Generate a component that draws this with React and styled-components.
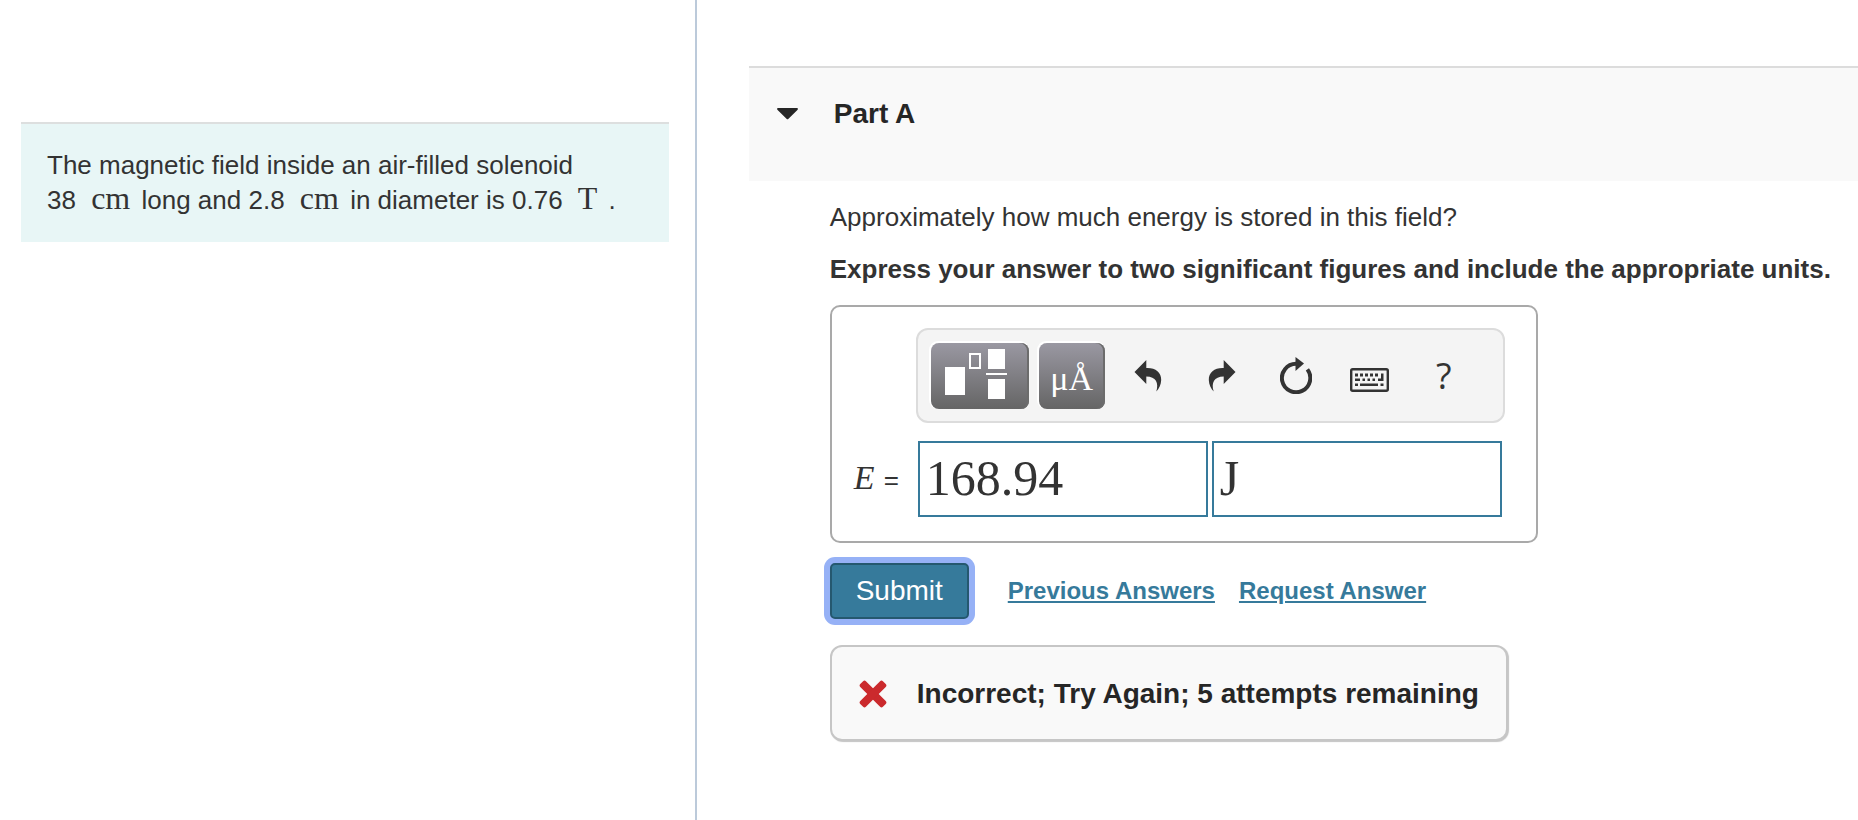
import React, { useState } from 'react';
import styled, { createGlobalStyle } from 'styled-components';

const GlobalStyle = createGlobalStyle`
  * {
    box-sizing: border-box;
  }

  body {
    margin: 0;
    background: #fff;
    color: #333;
    font-family: 'Liberation Sans', Arial, sans-serif;
    font-size: 26px;
    line-height: 34px;
  }

  p {
    margin: 0;
  }
`;

const Page = styled.div`
  display: grid;
  grid-template-columns: 3fr 5fr;
  min-height: 100vh;
`;

const ProblemPane = styled.aside`
  padding: 122px 26px 24px 21px;
  border-right: 2px solid #bccada;
`;

const ProblemCard = styled.p`
  padding: 24px 26px;
  border-top: 2px solid #dddfdf;
  background: #e8f6f6;
  min-height: 120px;
`;

const Unit = styled.span`
  margin: 0 4px 0 8px;
  font-family: 'Liberation Serif', serif;
  font-size: 32px;
  line-height: 1;
`;

const WorkPane = styled.main`
  min-width: 0;
  padding: 66px 0 24px 52px;
`;

const PartHeader = styled.header`
  height: 115px;
  padding: 29px 28px;
  border-top: 2px solid #dcdcdc;
  background: #f9f9f9;
`;

const PartToggle = styled.button`
  display: flex;
  align-items: center;
  gap: 36px;
  padding: 0;
  border: 0;
  background: none;
  color: #262626;
  font: bold 28px/34px 'Liberation Sans', Arial, sans-serif;
`;

const PartBody = styled.section`
  display: flex;
  flex-direction: column;
  align-items: flex-start;
  padding: 19px 0 0 81px;
`;

const Question = styled.p`
  margin-bottom: 18px;
`;

const Instructions = styled.p`
  font-weight: bold;
  white-space: nowrap;
`;

const AnswerBox = styled.form`
  width: 708px;
  max-width: 100%;
  margin-top: 19px;
  padding: 21px 31px 24px 20px;
  border: 2px solid #a9a9a9;
  border-radius: 10px;
`;

const Toolbar = styled.div`
  display: flex;
  align-items: center;
  height: 95px;
  margin-left: 64px;
  padding: 0 13px;
  border: 2px solid #dcdcdc;
  border-radius: 12px;
  background: #f4f4f4;
`;

const Palettes = styled.div`
  display: flex;
  gap: 10px;
  margin-right: 6px;
`;

const PaletteButton = styled.button`
  display: flex;
  align-items: center;
  justify-content: center;
  width: ${props => props.$width}px;
  height: 66px;
  padding: ${props => props.$padTop || 0}px 0 0;
  border: 0;
  border-radius: 8px;
  background: linear-gradient(#9a98a2, #656565);
  box-shadow: -1px -1px 0 1px #fff, inset -2px 0 0 #6c6c6c;
  color: #fff;
  font: 34px/40px 'Liberation Serif', serif;
`;

const ToolButton = styled.button`
  display: flex;
  align-items: center;
  justify-content: center;
  width: 74px;
  height: 66px;
  padding: ${props => props.$padTop || 0}px 0 0;
  border: 0;
  background: none;
  color: #333;
  font: 36px/40px 'Open Sans', 'Liberation Sans', sans-serif;
`;

const AnswerRow = styled.div`
  display: grid;
  grid-template-columns: 62px 1fr 1fr;
  align-items: center;
  gap: 4px;
  margin-top: 18px;
  padding-right: 3px;
`;

const AnswerLabel = styled.label`
  padding-left: 2px;
  font-size: 26px;
  white-space: nowrap;
`;

const Variable = styled.i`
  margin-right: 2px;
  font-family: 'Liberation Serif', serif;
  font-size: 34px;
  line-height: 1;
`;

const AnswerInput = styled.input`
  width: 100%;
  height: 76px;
  padding: 0 6px 2px;
  border: 2px solid #367a9b;
  border-radius: 0;
  background: #fff;
  color: #333;
  font: 50px/56px 'Liberation Serif', serif;
  outline: none;
`;

const Actions = styled.div`
  display: flex;
  align-items: center;
  margin-top: 20px;
`;

const SubmitButton = styled.button`
  width: 139px;
  height: 56px;
  margin-right: 39px;
  padding: 0;
  border: 2px solid #25586f;
  border-radius: 5px;
  background: #367a9b;
  box-shadow: 0 0 0 6px #96b1f6;
  color: #fff;
  font: 28px/34px 'Liberation Sans', Arial, sans-serif;
`;

const ActionLink = styled.a`
  margin-right: 24px;
  color: #367a9b;
  font-size: 24px;
  font-weight: bold;
  text-decoration: underline;
  text-decoration-thickness: 2px;
  text-underline-offset: 2px;
`;

const Feedback = styled.div`
  display: flex;
  align-items: center;
  gap: 30px;
  height: 96px;
  margin-top: 26px;
  padding: 2px 27px 0;
  border: 2px solid #c6c6c6;
  border-radius: 12px;
  background: #f9f9f9;
  box-shadow: 1px 1px 1px #c4c4c4;
  color: #262626;
  font-size: 28px;
  font-weight: bold;
  white-space: nowrap;
`;

function CaretIcon() {
  return (
    <svg width='21' height='12' viewBox='0 0 21 12' aria-hidden='true'>
      <path
        d='M1.2 0H19.8C21 0 21.2 1.2 20.4 2L11.5 10.8Q10.5 11.8 9.5 10.8L.6 2C-.2 1.2 0 0 1.2 0Z'
        fill='#262626'
      />
    </svg>
  );
}

function TemplatesIcon() {
  return (
    <svg width='98' height='66' viewBox='0 0 98 66' aria-hidden='true'>
      <path d='M14 24H34V52H14ZM57 6H74V26H57ZM55 30H76V32H55ZM57 36H74V56H57Z' fill='#fff' />
      <rect x='39' y='11' width='10' height='14' fill='none' stroke='#fff' strokeWidth='2' />
    </svg>
  );
}

function ArrowIcon({ flip }) {
  return (
    <svg width='28' height='32' viewBox='0 0 28 32' aria-hidden='true'>
      <path
        transform={flip ? 'translate(28 0) scale(-1 1)' : undefined}
        d='M.5 12L12.3 0V8C21 7.5 27.5 12 27.2 20C27 25 25 28.5 22.3 31.5C25 23 22 16.5 12.3 16.5V24Z'
        fill='#333'
      />
    </svg>
  );
}

function ResetIcon() {
  return (
    <svg width='32' height='37' viewBox='0 0 32 37' aria-hidden='true'>
      <path
        d='M27.4 12.4A14.2 14.2 0 1 1 16 6.8H17'
        fill='none'
        stroke='#333'
        strokeWidth='4'
      />
      <path d='M15.5 0L24 6.5L15.5 14Z' fill='#333' />
    </svg>
  );
}

function KeyboardIcon() {
  return (
    <svg width='39' height='24' viewBox='0 0 39 24' aria-hidden='true'>
      <rect x='1.2' y='1.2' width='36.6' height='21.6' rx='1.5' fill='none' stroke='#333' strokeWidth='2.4' />
      <path
        d='M5 5.5H8V8.5H5ZM10 5.5H13V8.5H10ZM15 5.5H18V8.5H15ZM20 5.5H23V8.5H20ZM25 5.5H28V8.5H25ZM31 5.5H33.5V13H28V10.5H31ZM5 10.5H10V13H5ZM12.5 10.5H15V13H12.5ZM17.5 10.5H20V13H17.5ZM22.5 10.5H25V13H22.5ZM5 15.5H8V18H5ZM10 15.5H28V18H10ZM30.5 15.5H33.5V18H30.5Z'
        fill='#333'
      />
    </svg>
  );
}

function CrossIcon() {
  return (
    <svg width='28' height='28' viewBox='0 0 28 28' aria-hidden='true'>
      <g fill='#cb2a2d' transform='rotate(45 14 14)'>
        <rect x='-2' y='10' width='32' height='8' rx='2' />
        <rect x='10' y='-2' width='8' height='32' rx='2' />
      </g>
    </svg>
  );
}

const tools = [
  { name: 'Undo', icon: <ArrowIcon /> },
  { name: 'Redo', icon: <ArrowIcon flip /> },
  { name: 'Reset', icon: <ResetIcon /> },
  { name: 'Keyboard shortcuts', icon: <KeyboardIcon />, padTop: 8 },
  { name: 'Help', icon: '?' }
];

function AnswerForm({ value, setValue, units, setUnits }) {
  return (
    <AnswerBox id='answer' onSubmit={event => event.preventDefault()}>
      <Toolbar role='toolbar'>
        <Palettes>
          <PaletteButton type='button' $width={98} aria-label='Templates'>
            <TemplatesIcon />
          </PaletteButton>
          <PaletteButton type='button' $width={66} $padTop={6}>
            μÅ
          </PaletteButton>
        </Palettes>
        {tools.map(tool => (
          <ToolButton
            key={tool.name}
            type='button'
            aria-label={tool.name}
            $padTop={tool.padTop}
          >
            {tool.icon}
          </ToolButton>
        ))}
      </Toolbar>
      <AnswerRow>
        <AnswerLabel htmlFor='value'>
          <Variable>E</Variable> =
        </AnswerLabel>
        <AnswerInput
          id='value'
          value={value}
          onChange={event => setValue(event.target.value)}
        />
        <AnswerInput
          aria-label='Units'
          value={units}
          onChange={event => setUnits(event.target.value)}
        />
      </AnswerRow>
    </AnswerBox>
  );
}

export default function App() {
  const [value, setValue] = useState('168.94');
  const [units, setUnits] = useState('J');
  const [open, setOpen] = useState(true);

  return (
    <Page>
      <GlobalStyle />
      <ProblemPane>
        <ProblemCard>
          The magnetic field inside an air-filled solenoid
          <br />
          38 <Unit>cm</Unit> long and 2.8 <Unit>cm</Unit> in diameter is 0.76{' '}
          <Unit>T</Unit> .
        </ProblemCard>
      </ProblemPane>
      <WorkPane>
        <PartHeader>
          <PartToggle aria-expanded={open} onClick={() => setOpen(!open)}>
            <CaretIcon />
            Part A
          </PartToggle>
        </PartHeader>
        {open && (
          <PartBody>
            <Question>Approximately how much energy is stored in this field?</Question>
            <Instructions>
              Express your answer to two significant figures and include the appropriate units.
            </Instructions>
            <AnswerForm
              value={value}
              setValue={setValue}
              units={units}
              setUnits={setUnits}
            />
            <Actions>
              <SubmitButton type='submit' form='answer'>
                Submit
              </SubmitButton>
              <ActionLink href='#previous'>Previous Answers</ActionLink>
              <ActionLink href='#request'>Request Answer</ActionLink>
            </Actions>
            <Feedback role='status'>
              <CrossIcon />
              Incorrect; Try Again; 5 attempts remaining
            </Feedback>
          </PartBody>
        )}
      </WorkPane>
    </Page>
  );
}
